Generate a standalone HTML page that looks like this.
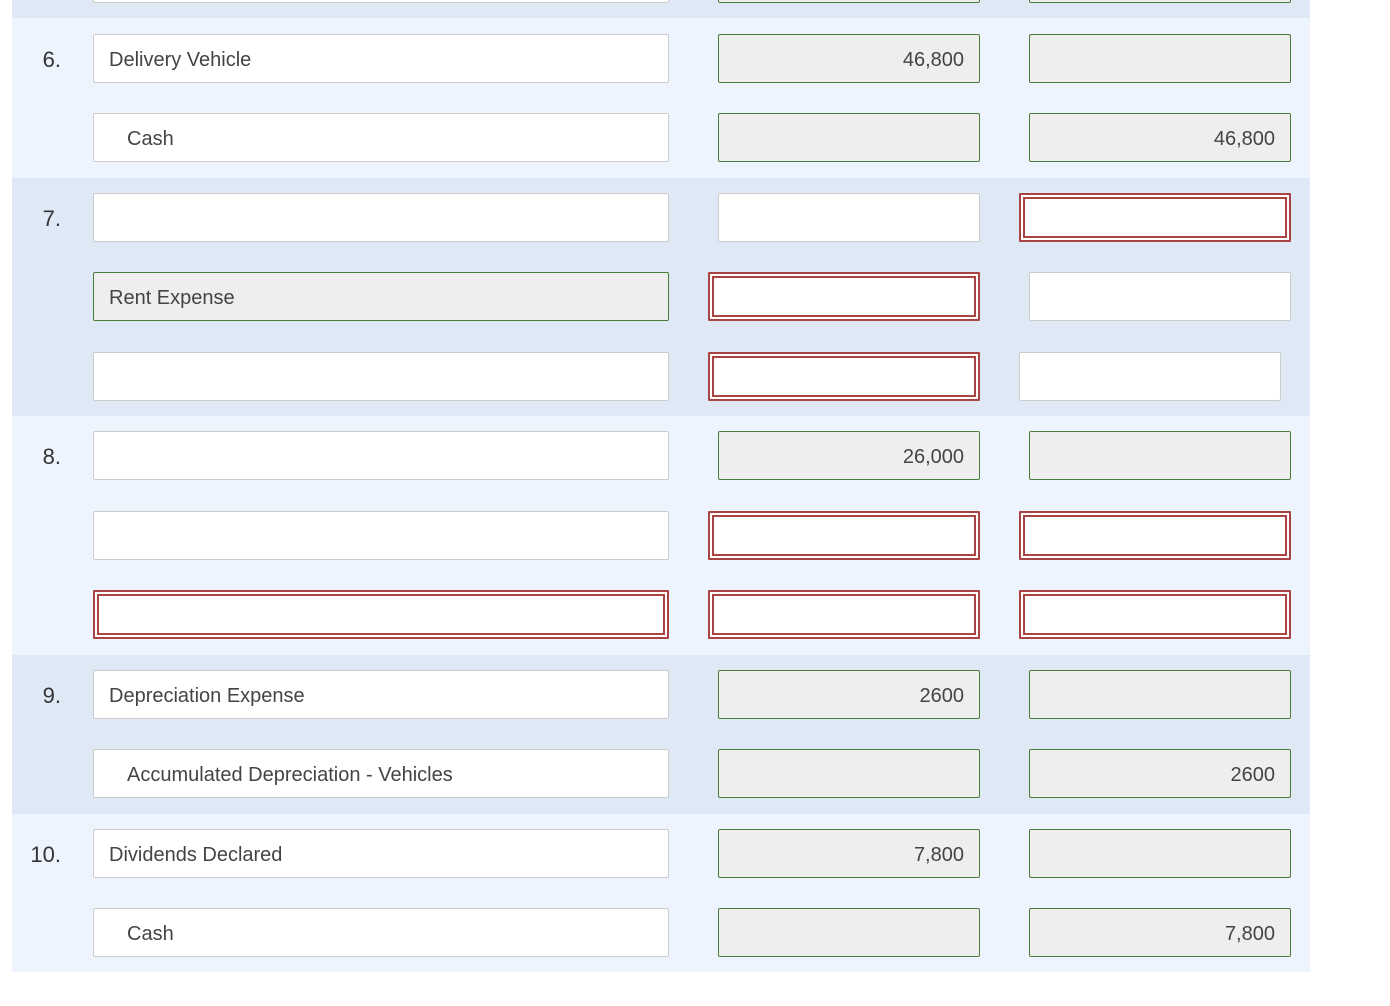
<!DOCTYPE html>
<html><head><style>
body{margin:0;width:1390px;height:1006px;background:#fff;position:relative;overflow:hidden;font-family:"Liberation Sans",sans-serif;}
.band{position:absolute;left:12px;width:1298px;}
.d{background:#dfe9f5}.l{background:#edf4fe}
.b{position:absolute;height:49px;box-sizing:border-box;border:1px solid #ccc;border-radius:2px;background:#fff;font-size:20px;color:#444;line-height:50px;padding:0 15px;white-space:nowrap;}
.a{left:93px;width:576px;}
.dr{left:718px;width:262px;text-align:right;}
.cr{left:1029px;width:262px;text-align:right;}
.g{background:#eee;border-color:#4a7d3a;}
.r{border:6px double #a44;border-radius:1px;}
.rd{left:708px;width:272px;}
.rc{left:1019px;width:272px;}
.n{position:absolute;font-size:22px;color:#333;line-height:51px;text-align:right;width:50px;left:11px;}
.in{padding-left:33px;}
</style></head><body>
<div class="band d" style="top:0;height:18px"></div>
<div class="band l" style="top:18px;height:160px"></div>
<div class="band d" style="top:178px;height:238px"></div>
<div class="band l" style="top:416px;height:239px"></div>
<div class="band d" style="top:655px;height:159px"></div>
<div class="band l" style="top:814px;height:158px"></div>

<div class="b a" style="top:-46px"></div>
<div class="b dr g" style="top:-46px"></div>
<div class="b cr g" style="top:-46px"></div>

<div class="n" style="top:34px">6.</div>
<div class="b a" style="top:34px">Delivery Vehicle</div>
<div class="b dr g" style="top:34px">46,800</div>
<div class="b cr g" style="top:34px"></div>
<div class="b a in" style="top:113px">Cash</div>
<div class="b dr g" style="top:113px"></div>
<div class="b cr g" style="top:113px">46,800</div>

<div class="n" style="top:193px">7.</div>
<div class="b a" style="top:193px"></div>
<div class="b dr" style="top:193px"></div>
<div class="b rc r" style="top:193px"></div>
<div class="b a g" style="top:272px">Rent Expense</div>
<div class="b rd r" style="top:272px"></div>
<div class="b cr" style="top:272px"></div>
<div class="b a" style="top:352px"></div>
<div class="b rd r" style="top:352px"></div>
<div class="b" style="top:352px;left:1019px;width:262px"></div>

<div class="n" style="top:431px">8.</div>
<div class="b a" style="top:431px"></div>
<div class="b dr g" style="top:431px">26,000</div>
<div class="b cr g" style="top:431px"></div>
<div class="b a" style="top:511px"></div>
<div class="b rd r" style="top:511px"></div>
<div class="b rc r" style="top:511px"></div>
<div class="b a r" style="top:590px"></div>
<div class="b rd r" style="top:590px"></div>
<div class="b rc r" style="top:590px"></div>

<div class="n" style="top:670px">9.</div>
<div class="b a" style="top:670px">Depreciation Expense</div>
<div class="b dr g" style="top:670px">2600</div>
<div class="b cr g" style="top:670px"></div>
<div class="b a in" style="top:749px">Accumulated Depreciation - Vehicles</div>
<div class="b dr g" style="top:749px"></div>
<div class="b cr g" style="top:749px">2600</div>

<div class="n" style="top:829px">10.</div>
<div class="b a" style="top:829px">Dividends Declared</div>
<div class="b dr g" style="top:829px">7,800</div>
<div class="b cr g" style="top:829px"></div>
<div class="b a in" style="top:908px">Cash</div>
<div class="b dr g" style="top:908px"></div>
<div class="b cr g" style="top:908px">7,800</div>
</body></html>
